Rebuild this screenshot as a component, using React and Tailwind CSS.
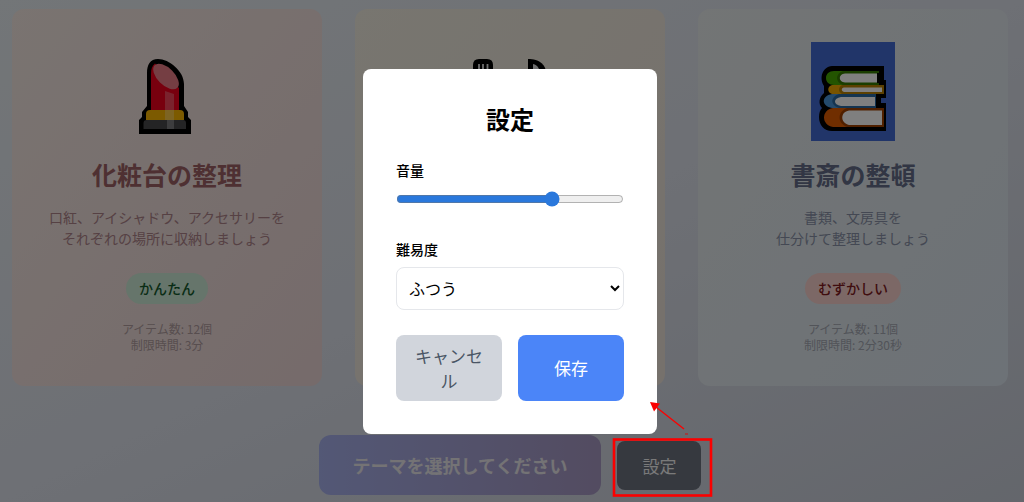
import { useState } from 'react'

function Lipstick() {
    return (
        <svg className="w-[84px] h-[99px]" viewBox="125 42 84 99" aria-hidden="true">
            <path d="M147 106 V73 C147 65 150 59 158 59 C169 59 184 71 184 84 V106 L188 112 V117 L191 120 V134 H139 V120 L142 117 V112 L147 106 Z" fill="#000" />
            <path d="M151 111 V74 C151 69 152 66 155 63.5 L179 88 V111 Z" fill="#f0001c" />
            <ellipse cx="166" cy="76.5" rx="16" ry="8.5" transform="rotate(45 166 76.5)" fill="#ea7c86" />
            <path d="M146 120 V114 Q146 110 150 110 H180 Q184 110 184 114 V120 Z" fill="#f8b400" />
            <path d="M143.500 129 V123 Q143.500 120 147 120 H183 Q186 120 186 123 V129 Z" fill="#48484a" />
            <path d="M165 91 L174 94 V129 H167 V120 H165 Z" fill="#fff" fillOpacity="0.28" />
        </svg>
    )
}

function Plate() {
    return (
        <svg className="w-[84px] h-[99px]" viewBox="468 42 84 99" aria-hidden="true">
            <path d="M473 134 V65 Q473 59 479 59 H487 Q493 59 493 65 V134 Z" fill="#000" />
            <path d="M479 64 V72 M483 64 V72 M487.500 64 V72" stroke="#dcdcdc" strokeWidth="1.800" />
            <path d="M528 134 V59 C539 59 547 64 547 78 V134 Z" fill="#000" />
            <path d="M533 134 V64 C538 65 541 70 541 80 V134 Z" fill="#dcdcdc" />
        </svg>
    )
}

function Books() {
    return (
        <svg className="w-[84px] h-[99px] bg-[#426ad2]" viewBox="811 42 84 99" aria-hidden="true">
            <path d="M832 66 H884 V80 H886 V98 H881 V103 H886 V131 H832 C824 131 819 125 819 117 C819 113 820 110 822 108 C818 104 819 97 824 93 V86 C819 78 822 67 832 66 Z" fill="#000" />
            <path d="M834 71 H879 V73 H877 V83 H879 V85 H834 C829 85 826 82 826 78 C826 74 829 71 834 71 Z" fill="#46a800" />
            <path d="M843 71 H879 V73 H877 V83 H879 V85 H843 C835 82 835 74 843 71 Z" fill="#347a00" />
            <path d="M845 73.500 H877 V82.500 H845 C838 82 838 74 845 73.500 Z" fill="#fff" />
            <path d="M832 85 H884 V94 H832 C827 93 827 86 832 85 Z" fill="#f0a800" />
            <path d="M842 85 H884 V94 H842 C838 92 838 87 842 85 Z" fill="#b88000" />
            <path d="M844 87.500 H882 V92 H844 C841 91 841 88 844 87.500 Z" fill="#fff" />
            <path d="M832 94 H876 V108 H832 C821 106 821 96 832 94 Z" fill="#4894d8" />
            <path d="M839 94 H876 V108 H839 C830 105 830 97 839 94 Z" fill="#2868a0" />
            <path d="M841 97 H875 V106 H841 C833 105 833 98 841 97 Z" fill="#fff" />
            <path d="M833 108 H884 V127 H833 C821 125 821 110 833 108 Z" fill="#e05c00" />
            <path d="M847 108 H884 V127 H847 C837 123 837 112 847 108 Z" fill="#a04000" />
            <path d="M849 110.500 H882 V125 H849 C840 123 840 112 849 110.500 Z" fill="#fff" />
        </svg>
    )
}

const themes = [
    {
        id: 'vanity',
        icon: Lipstick,
        title: '化粧台の整理',
        lines: ['口紅、アイシャドウ、アクセサリーを', 'それぞれの場所に収納しましょう'],
        level: 'かんたん',
        items: 'アイテム数: 12個',
        time: '制限時間: 3分',
        card: 'from-[#f4e8e2] to-[#ecd6d6]',
        titleColor: 'text-[#9c6064]',
        textColor: 'text-[#ac8288]',
        metaColor: 'text-[#b09c9e]',
        badge: 'bg-[#ccead6] text-[#145a2d]'
    },
    {
        id: 'kitchen',
        icon: Plate,
        card: 'from-[#f0ece0] to-[#ece2d8]'
    },
    {
        id: 'study',
        icon: Books,
        title: '書斎の整頓',
        lines: ['書類、文房具を', '仕分けて整理しましょう'],
        level: 'むずかしい',
        items: 'アイテム数: 11個',
        time: '制限時間: 2分30秒',
        card: 'from-[#e6eaea] to-[#dae4ee]',
        titleColor: 'text-[#646c88]',
        textColor: 'text-[#8890a6]',
        metaColor: 'text-[#a4a8b2]',
        badge: 'bg-[#f8d0cc] text-[#801a1e]'
    }
]

function ThemeCard({ theme }) {
    const Icon = theme.icon
    return (
        <article className={`flex flex-col items-center rounded-xl bg-linear-to-br p-[33px] text-center ${theme.card}`}>
            <Icon />
            {theme.title && (
                <>
                    <h3 className={`mt-4 text-[25px] leading-[34px] font-bold ${theme.titleColor}`}>{theme.title}</h3>
                    <p className={`mt-4 text-sm leading-[21px] whitespace-nowrap ${theme.textColor}`}>
                        {theme.lines[0]}<br />{theme.lines[1]}
                    </p>
                    <span className={`mt-6 rounded-full px-[13px] text-sm leading-[31px] font-medium ${theme.badge}`}>{theme.level}</span>
                    <div className={`mt-[17px] text-xs leading-4 ${theme.metaColor}`}>
                        <p>{theme.items}</p>
                        <p>{theme.time}</p>
                    </div>
                </>
            )}
        </article>
    )
}

function SettingsDialog({ onClose }) {
    const [volume, setVolume] = useState(70)
    const [difficulty, setDifficulty] = useState('normal')

    return (
        <div className="fixed inset-0 z-10 flex items-center justify-center bg-black/50 pr-1">
            <div role="dialog" aria-labelledby="settings-title" className="w-[294px] rounded-lg bg-white p-[33px] text-black">
                <h2 id="settings-title" className="text-center text-2xl leading-[34px] font-bold">設定</h2>

                <label htmlFor="volume" className="mt-6 block text-sm leading-5 font-medium">音量</label>
                <input
                    id="volume"
                    type="range"
                    min="0"
                    max="100"
                    value={volume}
                    onChange={(e) => setVolume(Number(e.target.value))}
                    className="mt-[11px] block w-full accent-[#2a78dc]"
                />

                <label htmlFor="difficulty" className="mt-8 block text-sm leading-5 font-medium">難易度</label>
                <select
                    id="difficulty"
                    value={difficulty}
                    onChange={(e) => setDifficulty(e.target.value)}
                    className="mt-2 block h-[43px] w-full rounded-lg border border-gray-200 bg-white px-2 text-base"
                >
                    <option value="normal">ふつう</option>
                </select>

                <div className="mt-[25px] flex gap-4">
                    <button onClick={onClose} className="flex-1 rounded-lg bg-gray-300 px-4 py-2 text-[17px] leading-[25px] text-gray-600">キャンセル</button>
                    <button onClick={onClose} className="flex-1 rounded-lg bg-[#4b85f8] px-4 py-2 text-[17px] leading-[25px] text-white">保存</button>
                </div>
            </div>
        </div>
    )
}

function App() {
    const [open, setOpen] = useState(true)

    return (
        <div className="min-h-screen bg-linear-to-br from-[#e6ecf0] via-[#dce0ea] to-[#c8cdd8] pt-[9px] pr-4 pl-3 font-['Noto_Sans_CJK_JP',sans-serif]">
            <div className="grid grid-cols-3 gap-[33px]">
                {themes.map(theme => <ThemeCard key={theme.id} theme={theme} />)}
            </div>

            <div className="mt-[49px] flex items-center justify-center gap-4">
                <button disabled className="rounded-xl bg-linear-to-r from-[#a6b0ec] to-[#a698c2] px-[34px] text-lg leading-[60px] font-bold text-[#e8e6ea]">
                    テーマを選択してください
                </button>
                <div className="relative">
                    <button onClick={() => setOpen(true)} className="rounded-lg bg-[#6c727e] px-[25px] text-[17px] leading-[49px] text-[#f4f4f4]">設定</button>
                    {/* Callout around the settings button, pointing at the dialog */}
                    <svg className="pointer-events-none absolute -top-10 left-0 z-20 h-24 w-24 overflow-visible" viewBox="617 401 96 96" aria-hidden="true">
                        <rect x="614" y="439.500" width="97" height="56" fill="none" stroke="#fb0000" strokeWidth="2.600" />
                        <path d="M656 407 L684 429" stroke="#fb0000" strokeWidth="1.400" />
                        <path d="M650 402 L660 403.500 L654 411.500 Z" fill="#fb0000" />
                        <path d="M685 434 H688" stroke="#d01010" strokeWidth="1" />
                    </svg>
                </div>
            </div>

            {open && <SettingsDialog onClose={() => setOpen(false)} />}
        </div>
    )
}

export default App
